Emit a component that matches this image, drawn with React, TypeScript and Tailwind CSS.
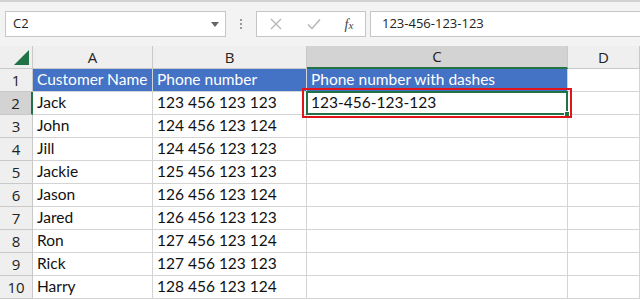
import React from "react";

const rows: [string, string][] = [
  ["Jack", "123 456 123 123"],
  ["John", "124 456 123 124"],
  ["Jill", "124 456 123 123"],
  ["Jackie", "125 456 123 123"],
  ["Jason", "126 456 123 124"],
  ["Jared", "126 456 123 123"],
  ["Ron", "127 456 123 124"],
  ["Rick", "127 456 123 123"],
  ["Harry", "128 456 123 124"],
];

const ui = { fontFamily: '"Open Sans", "Noto Sans", Arial, sans-serif' };
const sheet = { fontFamily: 'Lato, "Open Sans", Arial, sans-serif' };

function FormulaBar() {
  return (
    <div className="h-[46px] bg-[#f3f3f3] border-t-[2px] border-[#d2d2d2] flex items-start pt-[9px] pl-[5px]">
      <div className="w-[221px] h-[26px] bg-white border border-[#c6c6c6] flex items-center justify-between pl-[7px] pr-[6px] text-[13px] text-[#222]">
        <span>C2</span>
        <svg width="8" height="5" viewBox="0 0 8 5">
          <path d="M0 0h8L4 5z" fill="#666" />
        </svg>
      </div>
      <div className="w-[30px] h-[26px] flex flex-col items-center justify-center gap-[2px]">
        <span className="w-[2px] h-[2px] bg-[#9a9a9a]" />
        <span className="w-[2px] h-[2px] bg-[#9a9a9a]" />
        <span className="w-[2px] h-[2px] bg-[#9a9a9a]" />
      </div>
      <div className="w-[110px] h-[26px] bg-white border border-[#c6c6c6] flex items-center">
        <div className="w-[38px] flex justify-center">
          <svg width="12" height="12" viewBox="0 0 12 12">
            <path d="M1 1l10 10M11 1L1 11" stroke="#b5b5b5" strokeWidth="1.3" />
          </svg>
        </div>
        <div className="w-[38px] flex justify-center">
          <svg width="14" height="12" viewBox="0 0 14 12">
            <path d="M1 6.5l4 4L13 1.5" stroke="#b5b5b5" strokeWidth="1.5" fill="none" />
          </svg>
        </div>
        <div className="flex-1 flex justify-center">
          <span className="text-[14px] italic text-[#444]" style={{ fontFamily: '"Liberation Serif", serif' }}>
            f<span className="text-[11px]">x</span>
          </span>
        </div>
      </div>
      <div className="ml-[4px] flex-1 h-[26px] bg-white border-y border-l border-[#c6c6c6] flex items-center pl-[11px] text-[13px] text-[#222]">
        123-456-123-123
      </div>
    </div>
  );
}

export default function App() {
  const cell = "h-[23px] border-r border-b border-[#d4d4d4] flex items-center overflow-hidden whitespace-nowrap";
  const txt = " pl-[4px] text-[15.5px] text-[#111]";
  const blue = " bg-[#4472c4] text-white text-[15.5px] pl-[4px] border-[#4472c4]";
  const head = "h-[23px] bg-[#efefef] border-r border-b border-[#c9c9c9] flex items-center justify-center text-[15px] text-[#222]";

  return (
    <div className="w-[640px] h-[300px] overflow-hidden bg-white" style={ui}>
      <FormulaBar />
      <div className="grid grid-cols-[33px_120px_154px_261px_1fr]">
        <div className="h-[23px] bg-[#efefef] border-r border-b border-[#c9c9c9] flex items-end justify-end pr-[3px] pb-[3px]">
          <svg width="15" height="15" viewBox="0 0 15 15">
            <path d="M15 0V15H0z" fill="#217346" />
          </svg>
        </div>
        <div className={head}>A</div>
        <div className={head}>B</div>
        <div className={head + " !bg-[#d3d3d3] !border-b-[2px] !border-b-[#217346]"}>C</div>
        <div className={head}>D</div>

        <div className={head}>1</div>
        <div className={cell + blue} style={sheet}>Customer Name</div>
        <div className={cell + blue} style={sheet}>Phone number</div>
        <div className={cell + blue} style={sheet}>Phone number with dashes</div>
        <div className={cell} />

        {rows.map(([name, phone], i) => (
          <React.Fragment key={i}>
            <div className={head + (i === 0 ? " !bg-[#d3d3d3] !border-r-[2px] !border-r-[#217346]" : "")}>
              {i + 2}
            </div>
            <div className={cell + txt} style={sheet}>{name}</div>
            <div className={cell + txt} style={sheet}>{phone}</div>
            {i === 0 ? (
              <div className="relative h-[23px] border-r border-b border-[#d4d4d4]">
                <div
                  className="absolute inset-[-1px] border-[2px] border-[#217346] flex items-center pl-[3px] text-[15.5px] text-[#111]"
                  style={sheet}
                >
                  123-456-123-123
                </div>
                <div className="absolute right-[-3px] bottom-[-3px] w-[6px] h-[6px] bg-[#217346] border border-white" />
                <div className="absolute left-[-5px] top-[-4px] right-[-5px] bottom-[-4px] border-[2px] border-[#e0141b]" />
              </div>
            ) : (
              <div className={cell} />
            )}
            <div className={cell} />
          </React.Fragment>
        ))}
      </div>
    </div>
  );
}
